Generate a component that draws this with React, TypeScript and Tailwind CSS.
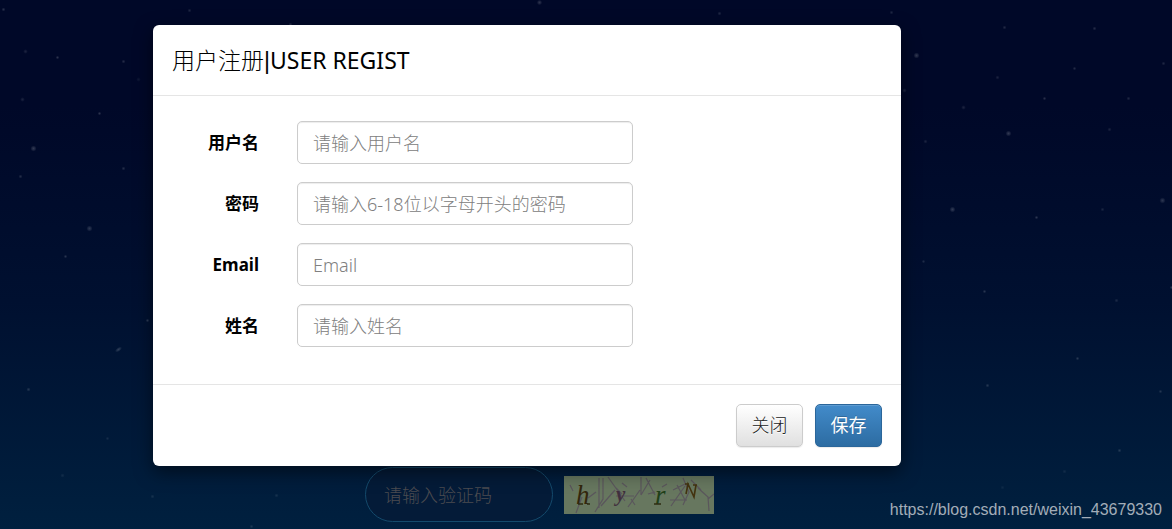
import React from "react";

type Star = [x: number, y: number, r: number, opacity: number];

const stars: Star[] = [
  [3, 9, 1.4, 0.18], [25, 51, 1.7, 0.12], [57, 57, 1.3, 0.2], [123, 61, 1.4, 0.16], [138, 79, 1.7, 0.07],
  [22, 99, 1.7, 0.12], [99, 113, 1.3, 0.2], [33, 148, 2.2, 0.22], [123, 168, 1.4, 0.16], [20, 176, 1.4, 0.16],
  [89, 228, 2.2, 0.2], [65, 256, 1.3, 0.18], [147, 320, 1.3, 0.2], [28, 389, 1.5, 0.16],
  [107, 438, 1.3, 0.1], [62, 475, 1.6, 0.08], [152, 496, 1.5, 0.1],
  [189, 10, 1.4, 0.14], [290, 24, 1.4, 0.16], [539, 2, 1.9, 0.2], [719, 13, 1.5, 0.14],
  [276, 495, 1.5, 0.1], [251, 526, 1.4, 0.12],
  [891, 12, 1.4, 0.14], [1004, 27, 1.4, 0.15], [1094, 28, 1.4, 0.16], [916, 55, 2.2, 0.22], [1163, 63, 1.4, 0.14],
  [1074, 68, 1.3, 0.16], [997, 77, 1.5, 0.12], [904, 90, 1.7, 0.12], [1044, 98, 1.3, 0.18], [1128, 98, 1.4, 0.14],
  [963, 107, 1.7, 0.12], [1109, 129, 1.5, 0.12], [1008, 133, 2.1, 0.22], [925, 141, 1.5, 0.12],
  [1162, 200, 2.2, 0.2], [952, 209, 2.1, 0.22], [1102, 209, 1.4, 0.12], [1036, 217, 1.3, 0.2],
  [923, 261, 1.3, 0.14], [1171, 287, 1.3, 0.18], [984, 291, 1.3, 0.18], [1116, 300, 1.5, 0.12],
  [1077, 358, 1.3, 0.18], [987, 385, 1.4, 0.16], [1160, 391, 1.3, 0.16], [1119, 450, 1.4, 0.16],
  [1064, 471, 1.5, 0.08], [1002, 487, 1.5, 0.06],
];

function StarField() {
  return (
    <svg aria-hidden="true" className="pointer-events-none absolute inset-0 h-full w-full">
      <defs>
        <radialGradient id="glow">
          <stop offset="0" stopColor="#fff" />
          <stop offset="0.4" stopColor="#fff" stopOpacity="0.7" />
          <stop offset="1" stopColor="#fff" stopOpacity="0" />
        </radialGradient>
      </defs>
      {stars.map(([x, y, r, opacity]) => (
        <circle key={`${x}-${y}`} cx={x + 0.5} cy={y + 0.5} r={r * 1.4} fill="url(#glow)" opacity={opacity * 0.85} />
      ))}
      <ellipse cx="118.5" cy="349.5" rx="4" ry="2" transform="rotate(-35 118.5 349.5)" fill="url(#glow)" opacity="0.18" />
    </svg>
  );
}

const fields = [
  { id: "username", label: "用户名", placeholder: "请输入用户名", type: "text" },
  { id: "password", label: "密码", placeholder: "请输入6-18位以字母开头的密码", type: "password" },
  { id: "email", label: "Email", placeholder: "Email", type: "email" },
  { id: "fullname", label: "姓名", placeholder: "请输入姓名", type: "text" },
];

function RegisterDialog() {
  return (
    <form
      role="dialog"
      aria-labelledby="register-title"
      className="relative z-10 w-full max-w-[748px] rounded-md bg-white shadow-[0_6px_18px_rgba(0,0,0,0.5)]"
    >
      <header className="border-b border-[#e5e5e5] px-[19px] py-[18px]">
        <h4 id="register-title" className="text-[23px] leading-[34px] font-light text-black">
          用户注册<span className="font-['Liberation_Sans',sans-serif] leading-none">|</span>
          <span className="leading-none font-normal">USER REGIST</span>
        </h4>
      </header>
      <div className="flex flex-col gap-[18px] px-[19px] pt-[25px] pb-[37px]">
        {fields.map((f) => (
          <div key={f.id} className="flex items-center gap-[38px]">
            <label htmlFor={f.id} className="w-[87px] shrink-0 text-right text-[17px] leading-6 font-bold text-black">
              {f.label}
            </label>
            <input
              id={f.id}
              type={f.type}
              placeholder={f.placeholder}
              className="h-[43px] w-full max-w-[336px] rounded-[5px] border border-[#ccc] bg-white px-[15px] text-[18px] font-light text-[#555] shadow-[inset_0_1px_1px_rgba(0,0,0,0.075)] outline-none placeholder:text-[#808080]"
            />
          </div>
        ))}
      </div>
      <footer className="flex justify-end gap-3 border-t border-[#e5e5e5] px-[19px] py-[19px]">
        <button
          type="button"
          className="h-[43px] w-[67px] rounded-[5px] border border-[#ccc] bg-linear-to-b from-white to-[#e0e0e0] text-[18px] font-light text-[#222] shadow-[0_1px_1px_rgba(0,0,0,0.08)] [text-shadow:0_1px_0_#fff]"
        >
          关闭
        </button>
        <button
          type="submit"
          className="h-[43px] w-[67px] rounded-[5px] border border-[#2b669a] bg-linear-to-b from-[#428bca] to-[#2d6ca2] text-[18px] text-white shadow-[inset_0_1px_0_rgba(255,255,255,0.15),0_1px_1px_rgba(0,0,0,0.08)] [text-shadow:0_-1px_0_rgba(0,0,0,0.2)]"
        >
          保存
        </button>
      </footer>
    </form>
  );
}

function Captcha() {
  return (
    <svg role="img" aria-label="hyrN" viewBox="0 0 150 38" className="h-[38px] w-[150px] shrink-0">
      <rect width="150" height="38" fill="#67775f" />
      <g stroke="#58505c" strokeWidth="1.2" strokeOpacity="0.85" fill="none">
        <path d="M6 9l3 6M12 37l6-16M24 22l8-6M35 2v30M39 2v21l-8 13M51 14L37 30M44 1l17 24M52 20h18M52 12l6 6M58 7l5 4" />
        <path d="M64 31l12-17M67 23l4 6M77 1v18M77 19l9-15M82 2l9 17M91 16l-7 2M98 11l5-3M107 30l14-20M109 14l12-6M106 24h17M119 2l6 14-6 13M113 9l8 15M127 4l10 10M134 12l10 9 1 14M144 23l6-5" />
      </g>
      <g fontFamily="'Liberation Serif', serif" fontStyle="italic">
        <text x="12" y="28" fill="#33260c" fontSize="27">h</text>
        <text x="52" y="25" fill="#41303e" fontSize="21" fontWeight="700">y</text>
        <text x="91" y="28" fill="#1f4018" fontSize="27">r</text>
      </g>
      <path d="M14 28h5M23 28h3M90 28h7" stroke="#2e2c12" strokeWidth="1.4" fill="none" />
      <path d="M122 18l2-10 6 13 2-12M129 9h4M121 8h4" stroke="#43330f" strokeWidth="1.6" fill="none" />
    </svg>
  );
}

export default function App() {
  return (
    <main className="relative min-h-screen overflow-hidden bg-linear-to-b from-[#000828] from-20% via-[#001030] via-57% to-[#00203f] font-['Noto_Sans','Noto_Sans_CJK_SC',sans-serif]">
      <StarField />
      <div className="flex flex-col items-center pt-[25px] pr-[118px]">
        <RegisterDialog />
        <div className="mt-px flex w-full max-w-[748px] items-center gap-[11px] pl-[212px]">
          <input
            type="text"
            aria-label="请输入验证码"
            placeholder="请输入验证码"
            className="h-[55px] w-[188px] rounded-[28px] border border-[#144a6c] bg-[#041b38] px-[18px] text-[18px] font-light text-[#444] outline-none placeholder:text-[#4c4c50]"
          />
          <Captcha />
        </div>
      </div>
      <a
        href="https://blog.csdn.net/weixin_43679330"
        className="absolute right-[10px] bottom-[9px] font-['Liberation_Sans',sans-serif] text-base leading-5 text-[#a3adb8]"
      >
        https://blog.csdn.net/weixin_43679330
      </a>
    </main>
  );
}
